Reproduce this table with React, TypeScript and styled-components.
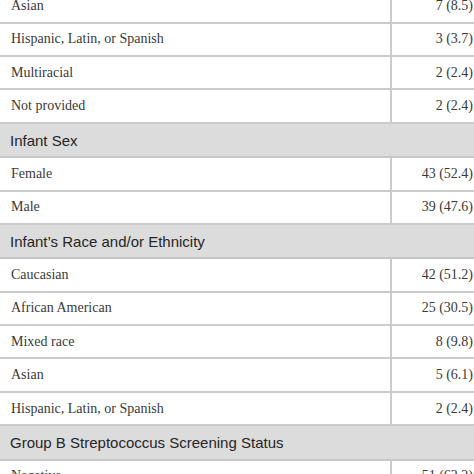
import React from "react";
import styled, { createGlobalStyle } from "styled-components";

const GlobalStyle = createGlobalStyle`
  html, body {
    margin: 0;
    padding: 0;
    background: #ffffff;
    overflow: hidden;
  }
`;

const Table = styled.div`
  width: 474px;
  margin-top: -9.7px;
  display: flex;
  flex-direction: column;
`;

const DataRow = styled.div`
  display: grid;
  grid-template-columns: 390px 1fr;
  height: 33.4px;
  box-sizing: border-box;
  border-bottom: 2px solid #cbcbcb;
`;

const LabelCell = styled.div`
  display: flex;
  align-items: center;
  padding-left: 11px;
  font-family: "Liberation Serif", "DejaVu Serif", serif;
  font-size: 14px;
  color: #3a3a3a;
`;

const ValueCell = styled.div`
  display: flex;
  align-items: center;
  justify-content: flex-end;
  padding-right: 1px;
  border-left: 2px solid #cbcbcb;
  font-family: "Liberation Serif", "DejaVu Serif", serif;
  font-size: 14px;
  color: #3a3a3a;
  white-space: nowrap;
`;

const SectionRow = styled.div`
  display: flex;
  align-items: center;
  height: 34.3px;
  box-sizing: border-box;
  padding-left: 10px;
  background: #dcdcdc;
  border-bottom: 2px solid #c6c6c6;
  font-family: "Liberation Sans", Arial, sans-serif;
  font-size: 15px;
  color: #262626;
`;

type Item =
  | { kind: "section"; title: string }
  | { kind: "data"; label: string; value: string };

const items: Item[] = [
  { kind: "data", label: "Asian", value: "7 (8.5)" },
  { kind: "data", label: "Hispanic, Latin, or Spanish", value: "3 (3.7)" },
  { kind: "data", label: "Multiracial", value: "2 (2.4)" },
  { kind: "data", label: "Not provided", value: "2 (2.4)" },
  { kind: "section", title: "Infant Sex" },
  { kind: "data", label: "Female", value: "43 (52.4)" },
  { kind: "data", label: "Male", value: "39 (47.6)" },
  { kind: "section", title: "Infant\u2019s Race and/or Ethnicity" },
  { kind: "data", label: "Caucasian", value: "42 (51.2)" },
  { kind: "data", label: "African American", value: "25 (30.5)" },
  { kind: "data", label: "Mixed race", value: "8 (9.8)" },
  { kind: "data", label: "Asian", value: "5 (6.1)" },
  { kind: "data", label: "Hispanic, Latin, or Spanish", value: "2 (2.4)" },
  { kind: "section", title: "Group B Streptococcus Screening Status" },
  { kind: "data", label: "Negative", value: "51 (62.2)" },
];

const App = () => {
  return (
    <>
      <GlobalStyle />
      <Table>
        {items.map((item, i) =>
          item.kind === "section" ? (
            <SectionRow key={i}>{item.title}</SectionRow>
          ) : (
            <DataRow key={i}>
              <LabelCell>{item.label}</LabelCell>
              <ValueCell>{item.value}</ValueCell>
            </DataRow>
          )
        )}
      </Table>
    </>
  );
};

export default App;
